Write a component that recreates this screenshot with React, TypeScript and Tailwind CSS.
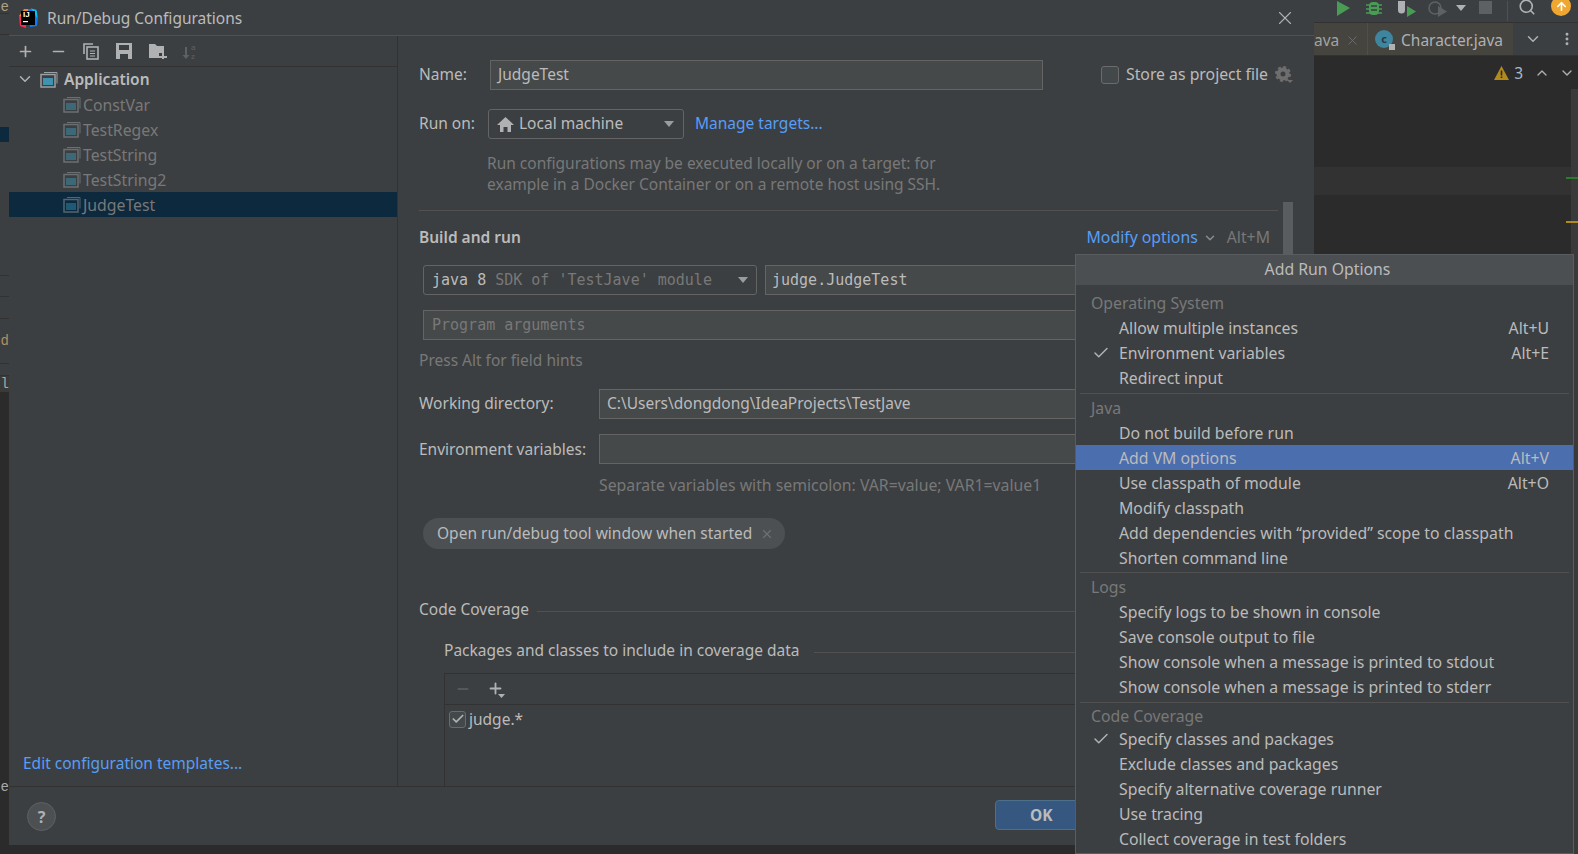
import React from "react";
import { Plus, Minus, X, ChevronDown, ChevronUp, Check, Search, ArrowUp, MoreVertical } from "lucide-react";

const RunIcon = ({ dim = false }: { dim?: boolean }) => (
  <svg width="18" height="17" viewBox="0 0 18 17" className={dim ? "opacity-50 shrink-0" : "shrink-0"}>
    <path d="M4 1.5h13v11" fill="none" stroke="#9aa0a3" strokeWidth="1" />
    <rect x="1" y="3.5" width="14" height="12.5" fill="none" stroke="#9aa0a3" strokeWidth="1.5" />
    <rect x="3" y="7" width="10" height="7" fill="#40b6e0" fillOpacity="0.7" />
  </svg>
);

const Caret = () => (
  <svg width="12" height="8" viewBox="0 0 12 8"><path d="M1 1h10L6 7z" fill="#9a9da0" /></svg>
);

const Logo = () => (
  <div className="relative w-[20px] h-[20px] shrink-0">
    <svg width="20" height="20" viewBox="0 0 20 20" className="absolute left-0 top-0">
      <path d="M1 8 L6 1 L12 1 L8 12z" fill="#fc801d" />
      <path d="M1 8 L8 10 L8 20 L2 18z" fill="#fe2857" />
      <path d="M10 1 L18 1 L20 9 L19 18 L12 19z" fill="#087cfa" />
      <path d="M13 0 L19 3 L19 10z" fill="#07c3f2" />
      <rect x="3" y="3" width="14" height="14" fill="#000" />
      <rect x="5" y="13" width="5" height="1.2" fill="#fff" />
    </svg>
    <span className="absolute left-[5px] top-[2px] text-[8px] leading-[10px] font-bold text-white font-['Liberation_Sans',sans-serif]">IJ</span>
  </div>
);

const tree = ["ConstVar", "TestRegex", "TestString", "TestString2", "JudgeTest"];

type Item = { t: string; k?: string; c?: boolean; s?: boolean };
const sections: { h: string; items: Item[] }[] = [
  { h: "Operating System", items: [{ t: "Allow multiple instances", k: "Alt+U" }, { t: "Environment variables", k: "Alt+E", c: true }, { t: "Redirect input" }] },
  { h: "Java", items: [{ t: "Do not build before run" }, { t: "Add VM options", k: "Alt+V", s: true }, { t: "Use classpath of module", k: "Alt+O" }, { t: "Modify classpath" }, { t: "Add dependencies with “provided” scope to classpath" }, { t: "Shorten command line" }] },
  { h: "Logs", items: [{ t: "Specify logs to be shown in console" }, { t: "Save console output to file" }, { t: "Show console when a message is printed to stdout" }, { t: "Show console when a message is printed to stderr" }] },
  { h: "Code Coverage", items: [{ t: "Specify classes and packages", c: true }, { t: "Exclude classes and packages" }, { t: "Specify alternative coverage runner" }, { t: "Use tracing" }, { t: "Collect coverage in test folders" }] },
];

function Popup() {
  return (
    <div className="absolute left-[1075px] top-[254px] w-[499px] h-[600px] bg-[#3c3f41] border border-[#5a5d5f] overflow-hidden text-[15.8px]">
      <div className="h-[30px] bg-[#4b4f52] flex items-center justify-center text-[#bbbbbb] pb-[2px] pl-[6px]">Add Run Options</div>
      <div className="pt-[6px]">
        {sections.map((sec, i) => (
          <div key={sec.h}>
            {i > 0 && (
              <div className={`${i === 1 ? "h-[6px]" : i === 3 ? "h-[6px]" : "h-[5px]"} flex items-center px-[4px]`}><div className="h-px w-full bg-[#515151]" /></div>
            )}
            <div className={`${i === 3 ? "h-[21px]" : "h-[24px]"} pl-[15px] flex items-center text-[#787878]`}>{sec.h}</div>
            {sec.items.map((it) => (
              <div key={it.t} className={`h-[25px] flex items-center pr-[24px] text-[#bbbbbb] ${it.s ? "bg-[#4b6eaf]" : ""}`}>
                <div className="w-[43px] shrink-0 pl-[16px]">
                  {it.c && <Check size={18} strokeWidth={2} className="text-[#afb1b3]" />}
                </div>
                <span>{it.t}</span>
                {it.k && <span className="ml-auto">{it.k}</span>}
              </div>
            ))}
          </div>
        ))}
      </div>
    </div>
  );
}

function LeftStrip() {
  return (
    <div className="w-[9px] shrink-0 h-full flex flex-col overflow-hidden text-[#a9a9a9] bg-[#3c3f41] font-['Liberation_Mono',monospace] text-[14px]">
      <div className="h-[14px] leading-[14px] border-b border-[#323232] text-[#b0a080] flex justify-end">e</div>
      <div className="h-[21px] border-b border-[#323232]" />
      <div className="h-[92px]" />
      <div className="h-[15px] bg-[#0d293e]" />
      <div className="h-[134px] border-b border-[#323232]" />
      <div className="h-[21px] border-b border-[#323232]" />
      <div className="h-[22px] border-b border-[#323232]" />
      <div className="h-[45px] border-b border-[#323232] flex items-center justify-end text-[#b09060]">d</div>
      <div className="h-[12px] border-b border-[#323232]" />
      <div className="h-[16px] bg-[#3a3a38] flex items-center justify-end">l</div>
      <div className="flex-1 bg-[#2b2b2b] flex flex-col justify-end pb-[57px] items-end"><span>e</span></div>
    </div>
  );
}

function ConfigPanel() {
  return (
    <div className="w-[389px] shrink-0 border-r border-[#323232] flex flex-col">
      <div className="h-[31px] shrink-0 border-b border-[#323232] flex items-center pl-[9px] text-[#afb1b3]">
        <Plus size={17} strokeWidth={2.4} className="ml-[-1px]" />
        <Minus size={17} strokeWidth={2.4} className="ml-[16px]" />
        <svg width="16" height="17" viewBox="0 0 16 17" className="ml-[16px]" fill="none" stroke="#afb1b3" strokeWidth="1.6"><path d="M1 11V1h9" /><rect x="4" y="4" width="11" height="12" /><path d="M7 8h5M7 10.5h5M7 13h5" strokeWidth="1.2" /></svg>
        <svg width="16" height="16" viewBox="0 0 16 16" className="ml-[17px]"><path d="M0 0h16v16H0z" fill="#afb1b3" /><rect x="3" y="2" width="10" height="5" fill="#3c3f41" /><rect x="4" y="11" width="8" height="5" fill="#3c3f41" /></svg>
        <svg width="18" height="16" viewBox="0 0 18 16" className="ml-[17px]"><path d="M0 1h6l2 2h7v7h-5v5H0z" fill="#afb1b3" /><path d="M13 10h2v3h3v2h-3v1h-2v-1h-3v-2h3z" fill="#afb1b3" /></svg>
        <svg width="16" height="17" viewBox="0 0 16 17" className="ml-[15px]" fill="#5e6163"><path d="M3 4h2v8h2.500L4 16 .5 12H3z" /><text x="9" y="7" fontSize="8" fontFamily="Liberation Sans">a</text><text x="9" y="16" fontSize="8" fontFamily="Liberation Sans">z</text></svg>
      </div>
      <div className="flex items-center h-[25px] pl-[7px] text-[#bbbbbb] font-semibold pb-[1px]">
        <ChevronDown size={18} className="text-[#afb1b3] shrink-0" />
        <span className="ml-[6px] flex"><RunIcon /></span>
        <span className="ml-[6px]">Application</span>
      </div>
      {tree.map((n) => (
        <div key={n} className={`h-[25px] flex items-center pl-[54px] gap-[2px] text-[#787878] text-[15.8px] ${n === "JudgeTest" ? "bg-[#0d293e]" : ""}`}>
          <RunIcon dim />
          <span>{n}</span>
        </div>
      ))}
      <div className="mt-auto h-[20px] mb-[13px] ml-[14px] flex items-center text-[#589df6]">Edit configuration templates...</div>
    </div>
  );
}

const field = "bg-[#45494a] border border-[#646464]";
const mono = "font-['DejaVu_Sans_Mono',monospace] text-[15px]";

function Form() {
  return (
    <div className="relative flex-1 min-w-0 overflow-hidden pl-[21px] pr-[21px] pt-[24px] flex flex-col text-[#bbbbbb]">
      <div className="h-[30px] flex items-center shrink-0">
        <span className="w-[71px] pb-[2px]">Name:</span>
        <div className={`${field} w-[553px] h-[30px] flex items-center pl-[7px] pb-[2px]`}>JudgeTest</div>
        <div className="w-[18px] h-[18px] rounded-[3px] border border-[#6b6b6b] bg-[#43494a] ml-[58px] shrink-0" />
        <span className="ml-[7px] whitespace-nowrap pb-[2px] text-[15.8px]">Store as project file</span>
        <svg width="18" height="18" viewBox="0 0 18 18" className="ml-[7px] shrink-0"><circle cx="8" cy="8" r="4.500" fill="none" stroke="#6e6e6e" strokeWidth="4" /><circle cx="8" cy="8" r="7" fill="none" stroke="#6e6e6e" strokeWidth="2" strokeDasharray="3 2.500" /><path d="M12 14h6l-3 3z" fill="#6e6e6e" /></svg>
      </div>
      <div className="h-[30px] flex items-center mt-[19px] shrink-0">
        <span className="w-[69px] pb-[2px]">Run on:</span>
        <div className="w-[196px] h-[30px] border border-[#646464] rounded-[3px] flex items-center pl-[8px] pr-[8px] bg-[#3c3f41]">
          <svg width="17" height="15" viewBox="0 0 17 15" className="shrink-0"><path d="M8.500 0 17 8h-3v7h-3.500v-5h-4v5H3V8H0z" fill="#afb1b3" /></svg>
          <span className="ml-[5px] pb-[2px]">Local machine</span>
          <span className="ml-auto flex"><Caret /></span>
        </div>
        <span className="ml-[11px] text-[#589df6] pb-[2px]">Manage targets...</span>
      </div>
      <div className="mt-[14px] ml-[68px] text-[#787878] leading-[21px] shrink-0">
        <div>Run configurations may be executed locally or on a target: for</div>
        <div>example in a Docker Container or on a remote host using SSH.</div>
      </div>
      <div className="mt-[15px] h-px w-[859px] bg-[#515151] shrink-0" />
      <div className="mt-[12px] h-[30px] flex items-center w-[851px] shrink-0 text-[15.8px]">
        <span className="font-semibold pb-[2px] text-[15.5px]">Build and run</span>
        <span className="ml-auto text-[#589df6] pb-[2px]">Modify options</span>
        <ChevronDown size={14} strokeWidth={2.5} className="text-[#8a8d8f] ml-[5px]" />
        <span className="ml-[10px] text-[#787878] pb-[2px]">Alt+M</span>
      </div>
      <div className="mt-[12px] flex h-[30px] ml-[4px] shrink-0">
        <div className={`w-[334px] h-[30px] border border-[#646464] rounded-[3px] flex items-center pl-[8px] pr-[7px] whitespace-nowrap ${mono}`}>
          <span className="text-[#bbbbbb]">java 8</span>
          <span className="text-[#787878] ml-[9px]">SDK of 'TestJave' module</span>
          <span className="ml-auto flex"><Caret /></span>
        </div>
        <div className={`${field} ${mono} ml-[8px] w-[500px] flex items-center pl-[6px]`}>judge.JudgeTest</div>
      </div>
      <div className={`${field} ${mono} mt-[15px] ml-[4px] h-[30px] w-[841px] flex items-center pl-[8px] shrink-0 text-[#787878]`}>Program arguments</div>
      <div className="mt-[11px] h-[20px] flex items-center text-[#787878] shrink-0 pb-[2px]">Press Alt for field hints</div>
      <div className="mt-[18px] h-[30px] flex items-center shrink-0">
        <span className="w-[180px] pb-[2px]">Working directory:</span>
        <div className={`${field} w-[660px] h-[30px] flex items-center pl-[7px] pb-[2px]`}>C:\Users\dongdong\IdeaProjects\TestJave</div>
      </div>
      <div className="mt-[15px] h-[30px] flex items-center shrink-0">
        <span className="w-[180px]">Environment variables:</span>
        <div className={`${field} w-[660px] h-[30px]`} />
      </div>
      <div className="mt-[13px] ml-[180px] h-[20px] flex items-center text-[#787878] shrink-0 pb-[4px] text-[15.8px]">Separate variables with semicolon: VAR=value; VAR1=value1</div>
      <div className="mt-[21px] ml-[4px] w-[362px] h-[31px] rounded-full bg-[#4c5052] flex items-center pl-[14px] shrink-0">
        <span className="pb-[2px]">Open run/debug tool window when started</span>
        <X size={14} className="ml-[8px] text-[#6e7173]" />
      </div>
      <div className="mt-[52px] h-[20px] flex items-center shrink-0">
        <span className="mr-[8px] pb-[4px]">Code Coverage</span>
        <div className="h-px flex-1 bg-[#515151]" />
      </div>
      <div className="mt-[21px] ml-[25px] h-[20px] flex items-center shrink-0">
        <span className="mr-[15px] pb-[4px]">Packages and classes to include in coverage data</span>
        <div className="h-px flex-1 bg-[#515151]" />
      </div>
      <div className="mt-[11px] ml-[25px] flex-1 border-t border-l border-[#323232] min-h-0">
        <div className="h-[31px] border-b border-[#323232] flex items-center pl-[10px]">
          <Minus size={16} strokeWidth={2.4} className="text-[#5e6163]" />
          <div className="relative ml-[16px] w-[18px] h-[18px] flex">
            <Plus size={17} strokeWidth={2.6} className="text-[#afb1b3]" />
            <svg width="7" height="4" viewBox="0 0 7 4" className="absolute right-0 bottom-0"><path d="M0 0h7L3.500 4z" fill="#afb1b3" /></svg>
          </div>
        </div>
        <div className="flex items-center h-[28px] pl-[4px]">
          <div className="w-[17px] h-[17px] rounded-[3px] border border-[#6b6b6b] bg-[#43494a] flex items-center justify-center shrink-0">
            <Check size={14} strokeWidth={3} className="text-[#afb1b3]" />
          </div>
          <span className="ml-[3px]">judge.*</span>
        </div>
      </div>
      <div className="absolute left-[885px] top-[166px] w-[10px] h-[60px] bg-[#5a5d5f]" />
    </div>
  );
}

function Dialog() {
  return (
    <div className="w-[1305px] shrink-0 h-[845px] bg-[#3c3f41] flex flex-col">
      <div className="h-[36px] shrink-0 border-b border-[#515151] flex items-center pl-[9px] pr-[18px] text-[#bbbbbb]">
        <Logo />
        <span className="ml-[9px]">Run/Debug Configurations</span>
        <X size={22} strokeWidth={1.2} className="ml-auto text-[#afb1b3]" />
      </div>
      <div className="flex-1 min-h-0 flex">
        <ConfigPanel />
        <Form />
      </div>
      <div className="h-[59px] shrink-0 border-t border-[#323232] flex items-center pl-[18px]">
        <div className="w-[29px] h-[29px] rounded-full bg-[#4c5052] border border-[#5e6163] flex items-center justify-center text-[#afb1b3] font-bold text-[16px] mb-[-1px]">?</div>
        <div className="ml-[939px] w-[100px] h-[30px] rounded-[4px] bg-[#365880] border border-[#4c708c] flex items-center justify-start pl-[34px] text-[#bbbbbb] font-bold mb-[2px]">OK</div>
      </div>
    </div>
  );
}

function IdeRight() {
  return (
    <div className="flex-1 min-w-0 h-full flex flex-col bg-[#2b2b2b]">
      <div className="h-[23px] shrink-0 bg-[#3c3f41] border-b border-[#323232] flex items-center relative overflow-hidden pl-[23px]">
        <svg width="13" height="15" viewBox="0 0 13 15" className="mt-[-6px]"><path d="M0 0l13 7-13 8z" fill="#499c54" /></svg>
        <svg width="16" height="15" viewBox="0 0 16 15" className="ml-[16px] mt-[-6px]"><rect x="3" y="1" width="10" height="13" rx="4" fill="#499c54" /><path d="M0 4h16M0 8h16M0 12h16" stroke="#499c54" strokeWidth="1.5" /><path d="M5 5h6M5 9h6" stroke="#3c3f41" strokeWidth="1.5" /></svg>
        <svg width="20" height="16" viewBox="0 0 20 16" className="ml-[15px] mt-[-4px]"><path d="M1 0h7v9a3.500 3.500 0 0 1-7 0z" fill="#afb1b3" /><path d="M10 5l9 5.500-9 5.500z" fill="#499c54" /></svg>
        <svg width="20" height="16" viewBox="0 0 20 16" className="ml-[11px] mt-[-4px]"><circle cx="7" cy="7" r="6" fill="none" stroke="#5e6163" strokeWidth="1.6" /><path d="M10 5l9 5.500-9 5.500z" fill="#5e6163" /></svg>
        <svg width="10" height="6" viewBox="0 0 10 6" className="ml-[8px] mt-[-6px]"><path d="M0 0h10L5 6z" fill="#afb1b3" /></svg>
        <div className="ml-[13px] w-[13px] h-[13px] bg-[#5e6163] mt-[-8px]" />
        <div className="ml-[15px] w-px h-[20px] bg-[#515151]" />
        <Search size={18} strokeWidth={2.2} className="ml-[10px] text-[#afb1b3] mt-[-8px] shrink-0" />
        <div className="ml-[15px] w-[20px] h-[20px] rounded-full bg-[#f0a732] flex items-center justify-center mt-[-10px] shrink-0">
          <ArrowUp size={13} strokeWidth={3} className="text-white" />
        </div>
      </div>
      <div className="h-[33px] shrink-0 bg-[#3c3f41] border-b border-[#323232] flex items-center text-[#afb1b3]">
        <div className="w-[54px] h-full bg-[#45443f] border-r border-[#504f48] flex items-center pt-[2px]">
          <span className="text-[#a0a3a5] w-[25px] whitespace-nowrap">ava</span>
          <X size={15} strokeWidth={1.4} className="ml-[6px] text-[#6e7173]" />
        </div>
        <div className="w-[145px] h-full bg-[#45443f] flex items-center pl-[7px] shrink-0">
          <div className="relative w-[18px] h-[18px] rounded-full bg-[#3e86a0] flex items-center justify-center text-[#2b3b44] text-[11px] font-bold shrink-0">
            c
            <div className="absolute right-[-2px] bottom-[-2px] w-[6px] h-[6px] bg-[#afb1b3]" />
          </div>
          <span className="ml-[8px] pt-[2px]">Character.java</span>
        </div>
        <ChevronDown size={18} className="ml-[11px] shrink-0" />
        <MoreVertical size={16} strokeWidth={2.4} className="ml-[17px] shrink-0 text-[#afb1b3]" />
      </div>
      <div className="flex-1 min-h-0 flex flex-col relative">
        <div className="h-[33px] flex items-center justify-end pr-[3px] text-[#a9b7c6] shrink-0">
          <svg width="15" height="14" viewBox="0 0 15 14"><path d="M7.500 0 15 14H0z" fill="#b38a1c" /><path d="M6.700 4.500h1.600v5H6.700zM6.700 10.500h1.600V12H6.700z" fill="#2b2b2b" /></svg>
          <span className="ml-[5px] mr-[11px]">3</span>
          <ChevronUp size={16} strokeWidth={2} className="text-[#afb1b3] mr-[9px]" />
          <ChevronDown size={16} strokeWidth={2} className="text-[#afb1b3]" />
        </div>
        <div className="mt-[78px] h-[28px] bg-[#323232] shrink-0" />
        <div className="absolute right-0 top-[33px] bottom-0 w-[7px] bg-[#3a3a3a]" />
        <div className="absolute right-0 top-[121px] w-[12px] h-[2px] bg-[#2a7d2a]" />
        <div className="absolute right-0 top-[165px] w-[12px] h-[2px] bg-[#b38a1c]" />
      </div>
    </div>
  );
}

export default function App() {
  return (
    <div className="relative w-[1578px] h-[854px] overflow-hidden bg-[#2b2b2b] flex font-['Noto_Sans',sans-serif] text-[15.5px] leading-[20px]">
      <LeftStrip />
      <div className="w-[1305px] shrink-0 h-full bg-[#2b2b2b]"><Dialog /></div>
      <IdeRight />
      <Popup />
    </div>
  );
}
